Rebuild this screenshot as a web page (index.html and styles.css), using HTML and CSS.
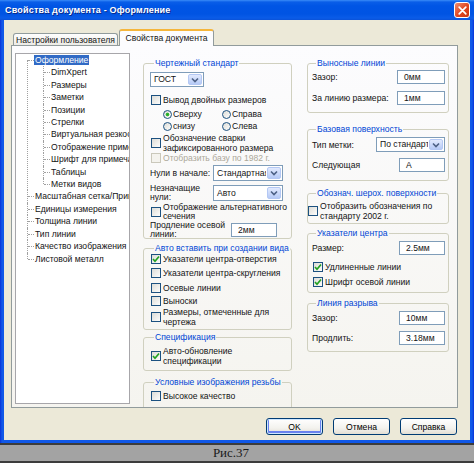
FILE: index.html
```html
<!DOCTYPE html>
<html lang="ru">
<head>
<meta charset="utf-8">
<title>Свойства документа - Оформление</title>
<link rel="stylesheet" href="styles.css">
</head>
<body>
<div class="window">
  <div class="titlebar">
    <span class="title">Свойства документа - Оформление</span>
    <span class="close"><svg width="9" height="9" viewBox="0 0 9 9"><path d="M1.2 1.2 L7.8 7.8 M7.8 1.2 L1.2 7.8" stroke="#fff" stroke-width="1.7" stroke-linecap="round"/></svg></span>
  </div>
  <div class="client">
    <div class="tabs">
      <div class="tab">Настройки пользователя</div>
      <div class="tab active">Свойства документа</div>
    </div>
    <div class="panel">
      <div class="tree">
        <ul class="root">
          <li><span class="sel">Оформление</span>
            <ul>
              <li>DimXpert</li>
              <li>Размеры</li>
              <li>Заметки</li>
              <li>Позиции</li>
              <li>Стрелки</li>
              <li>Виртуальная резкость</li>
              <li>Отображение примечаний</li>
              <li>Шрифт для примечаний</li>
              <li>Таблицы</li>
              <li>Метки видов</li>
            </ul>
          </li>
          <li>Масштабная сетка/Привязка</li>
          <li>Единицы измерения</li>
          <li>Толщина линии</li>
          <li>Тип линии</li>
          <li>Качество изображения</li>
          <li>Листовой металл</li>
        </ul>
      </div>

      <div class="middle">
        <fieldset class="grp m1">
          <legend>Чертежный стандарт</legend>
          <div class="combo c-gost"><span class="cv">ГОСТ</span><span class="dd"><svg width="8" height="6" viewBox="0 0 8 6"><path d="M1 1.5 L4 4.5 L7 1.5" fill="none" stroke="#4d6185" stroke-width="1.6"/></svg></span></div>
          <div class="chk r-dbl"><span class="cb"></span><span>Вывод двойных размеров</span></div>
          <div class="radios">
            <div class="rad"><span class="rb on"></span><span>Сверху</span></div>
            <div class="rad"><span class="rb"></span><span>Справа</span></div>
            <div class="rad"><span class="rb"></span><span>снизу</span></div>
            <div class="rad"><span class="rb"></span><span>Слева</span></div>
          </div>
          <div class="chk two r-weld"><span class="cb"></span><span>Обозначение сварки<br>зафиксированного размера</span></div>
          <div class="chk dis"><span class="cb"></span><span>Отобразить базу по 1982 г.</span></div>
          <div class="frow r-zero"><span class="flbl w63">Нули в начале:</span><div class="combo c-wide"><span class="cv">Стандартная</span><span class="dd"><svg width="8" height="6" viewBox="0 0 8 6"><path d="M1 1.5 L4 4.5 L7 1.5" fill="none" stroke="#4d6185" stroke-width="1.6"/></svg></span></div></div>
          <div class="frow r-nz"><span class="flbl w63 two">Незначащие<br>нули:</span><div class="combo c-wide"><span class="cv">Авто</span><span class="dd"><svg width="8" height="6" viewBox="0 0 8 6"><path d="M1 1.5 L4 4.5 L7 1.5" fill="none" stroke="#4d6185" stroke-width="1.6"/></svg></span></div></div>
          <div class="chk two r-alt"><span class="cb"></span><span>Отображение альтернативного<br>сечения</span></div>
          <div class="frow r-prod"><span class="flbl w81 two">Продление осевой<br>линии:</span><span class="inp w46">2мм</span></div>
        </fieldset>

        <fieldset class="grp m2">
          <legend>Авто вставить при создании вида</legend>
          <div class="chk h12"><span class="cb on"><svg width="8" height="8" viewBox="0 0 8 8"><path d="M1 4 L3 6.2 L7 1.5" fill="none" stroke="#21a121" stroke-width="1.7"/></svg></span><span>Указатели центра-отверстия</span></div>
          <div class="chk h15"><span class="cb"></span><span>Указатели центра-скругления</span></div>
          <div class="chk h15"><span class="cb"></span><span>Осевые линии</span></div>
          <div class="chk h12"><span class="cb"></span><span>Выноски</span></div>
          <div class="chk two h20"><span class="cb"></span><span>Размеры, отмеченные для<br>чертежа</span></div>
        </fieldset>

        <fieldset class="grp m3">
          <legend>Спецификация</legend>
          <div class="chk two h20 r-spec"><span class="cb on"><svg width="8" height="8" viewBox="0 0 8 8"><path d="M1 4 L3 6.2 L7 1.5" fill="none" stroke="#21a121" stroke-width="1.7"/></svg></span><span>Авто-обновление<br>спецификации</span></div>
        </fieldset>

        <fieldset class="grp m4">
          <legend>Условные изображения резьбы</legend>
          <div class="chk h10 r-hq"><span class="cb"></span><span>Высокое качество</span></div>
        </fieldset>
      </div>

      <div class="right">
        <fieldset class="grp rg1">
          <legend>Выносные линии</legend>
          <div class="frow rr a2"><span>Зазор:</span><span class="inp w48">0мм</span></div>
          <div class="frow rr a7"><span>За линию размера:</span><span class="inp w48">1мм</span></div>
        </fieldset>

        <fieldset class="grp rg2">
          <legend>Базовая поверхность</legend>
          <div class="frow rr a3"><span>Тип метки:</span><div class="combo c-std"><span class="cv">По стандарту</span><span class="dd"><svg width="8" height="6" viewBox="0 0 8 6"><path d="M1 1.5 L4 4.5 L7 1.5" fill="none" stroke="#4d6185" stroke-width="1.6"/></svg></span></div></div>
          <div class="frow rr a6"><span>Следующая</span><span class="inp w46">A</span></div>
        </fieldset>

        <fieldset class="grp rg3">
          <legend>Обознач. шерох. поверхности</legend>
          <div class="chk two r-rough"><span class="cb"></span><span>Отобразить обозначения по<br>стандарту 2002 г.</span></div>
        </fieldset>

        <fieldset class="grp rg4">
          <legend>Указатели центра</legend>
          <div class="frow rr a3"><span>Размер:</span><span class="inp w46">2.5мм</span></div>
          <div class="chk h12 r-ext"><span class="cb on"><svg width="8" height="8" viewBox="0 0 8 8"><path d="M1 4 L3 6.2 L7 1.5" fill="none" stroke="#21a121" stroke-width="1.7"/></svg></span><span>Удлиненные линии</span></div>
          <div class="chk h12 r-font"><span class="cb on"><svg width="8" height="8" viewBox="0 0 8 8"><path d="M1 4 L3 6.2 L7 1.5" fill="none" stroke="#21a121" stroke-width="1.7"/></svg></span><span>Шрифт осевой линии</span></div>
        </fieldset>

        <fieldset class="grp rg5">
          <legend>Линия разрыва</legend>
          <div class="frow rr a3"><span>Зазор:</span><span class="inp w46">10мм</span></div>
          <div class="frow rr a6"><span>Продлить:</span><span class="inp w46">3.18мм</span></div>
        </fieldset>
      </div>
    </div>
    <div class="buttons">
      <button class="btn def">OK</button>
      <button class="btn">Отмена</button>
      <button class="btn">Справка</button>
    </div>
  </div>
</div>
<div class="caption">Рис.37</div>
</body>
</html>
```

FILE: styles.css
```css
* { box-sizing: border-box; }
html, body { margin: 0; padding: 0; }
body {
  width: 474px; height: 463px; overflow: hidden;
  background: #a3a3a3;
  font-family: "Liberation Sans", Arial, sans-serif;
  font-size: 8.6px; color: #141414;
}

/* window frame */
.window {
  height: 443px;
  display: flex; flex-direction: column;
  background: linear-gradient(90deg, #0831d9 0, #1058e8 2px, #1058e8 calc(100% - 2px), #0831d9 100%);
}
.titlebar {
  height: 20px; flex: none;
  display: flex; align-items: center; justify-content: space-between;
  padding: 0 4px 0 5px;
  background: linear-gradient(#3a8cf8 0, #0a5ee8 2px, #0055e5 6px, #0054e3 14px, #0a5ce8 18px, #0a52d8 20px);
}
.title {
  color: #fff; font-weight: bold; font-size: 9px;
  text-shadow: 1px 1px 0 #0a2a8a;
  letter-spacing: 0.2px;
}
.close {
  width: 16px; height: 16px;
  border: 1px solid #fff; border-radius: 3px;
  background: linear-gradient(135deg, #f28d6e, #e0451e 55%, #c8340f);
  display: flex; align-items: center; justify-content: center;
}

.client {
  flex: 1;
  margin: 0 4px 3px 4px;
  background: #ece9d8;
  padding: 9px 0 0 7px;
  display: flex; flex-direction: column;
}

/* tabs */
.tabs {
  height: 16px; display: flex; align-items: flex-end;
  padding-left: 2px;
}
.tab {
  height: 12px; width: 105px;
  border: 1px solid #919b9c; border-bottom: none;
  border-radius: 3px 3px 0 0;
  background: linear-gradient(#fefefe, #ecebe6);
  display: flex; align-items: center; justify-content: center;
  white-space: nowrap;
}
.tab.active {
  height: 17px; width: 95px; margin-left: 1px; margin-bottom: -1px;
  border-top: 2px solid #f5b63c;
  background: #fcfcfe;
  position: relative; z-index: 1;
  padding-bottom: 2px;
}

.panel {
  width: 447px; height: 363px;
  border: 1px solid #919b9c;
  background: linear-gradient(#fcfcfe, #f5f4ef);
  display: flex;
  padding: 7px 0 0 3px;
}

/* tree */
.tree {
  width: 115px; height: 351px; flex: none;
  border: 1px solid #a7a6aa;
  background: #fff;
  padding: 0 0 0 11px;
  overflow: hidden;
  white-space: nowrap;
}
.tree ul { list-style: none; margin: 0; padding: 0; }
.tree ul ul { padding-left: 8px; }
.tree li {
  position: relative;
  padding-left: 8px;
  line-height: 12.4px;
}
.tree li::before {
  content: ""; position: absolute; left: 0; top: 0; bottom: 0;
  border-left: 1px dotted #a0a0a0;
}
.tree li::after {
  content: ""; position: absolute; left: 1px; top: 6px; width: 6px;
  border-top: 1px dotted #a0a0a0;
}
.tree .root > li:first-child::before { top: 6px; }
.tree li:last-child::before { bottom: auto; height: 6px; }
.sel {
  background: #316ac5; color: #fff;
  padding: 0 1px; margin-left: -1px;
}

/* columns */
.middle {
  width: 149px; flex: none; margin-left: 13px;
  overflow: hidden;
  padding-top: 5px;
  display: flex; flex-direction: column;
}
.right {
  width: 142px; flex: none; margin-left: 15px;
  padding-top: 5px;
  display: flex; flex-direction: column;
}

fieldset.grp {
  margin: 0; min-width: 0;
  border: 1px solid #d0d0bf; border-radius: 3px;
  padding: 0 4px 0 6px;
  display: flex; flex-direction: column;
}
fieldset.grp legend {
  padding: 0 1px; margin-left: 4px;
  color: #0046d5;
  line-height: 10px; height: 10px;
  white-space: nowrap;
}

/* controls */
.chk {
  display: flex; align-items: center; gap: 2px;
  margin-left: 1px;
  line-height: 12px; white-space: nowrap;
}
.chk.two { line-height: 10px; }
.cb {
  width: 10px; height: 10px; flex: none;
  border: 1px solid #1c5180;
  background: linear-gradient(135deg, #dcdcd7, #fdfdfc);
  display: inline-flex; align-items: center; justify-content: center;
}
.chk.dis { color: #aca899; height: 10px; }
.chk.dis .cb { border-color: #cac8bb; background: #f4f3ee; }

.radios {
  margin: 2px 0 0 13px;
  display: grid; grid-template-columns: 59px auto; grid-auto-rows: 12px;
}
.rad { display: flex; align-items: center; gap: 1px; white-space: nowrap; }
.rb {
  width: 9px; height: 9px; flex: none;
  border: 1px solid #1c5180; border-radius: 50%;
  background: linear-gradient(135deg, #dcdcd7, #fdfdfc);
}
.rb.on {
  background: radial-gradient(circle, #21a121 0, #3bbd3b 1.6px, transparent 2.2px), linear-gradient(135deg, #dcdcd7, #fdfdfc);
}

.combo {
  display: flex; height: 15px;
  border: 1px solid #7f9db9; background: #fff;
}
.combo .cv {
  flex: 1; padding-left: 3px; line-height: 13px;
  overflow: hidden; white-space: nowrap;
}
.combo .dd {
  width: 14px; flex: none; margin: 1px;
  border: 1px solid #b4c8f4; border-radius: 2px;
  background: linear-gradient(#e2eafe, #b6caf6);
  display: flex; align-items: center; justify-content: center;
}
.c-gost { width: 54px; margin-top: 4px; }
.c-wide { width: 70px; height: 16px; }
.c-wide .cv { line-height: 14px; }
.c-std { width: 69px; }

.inp {
  display: block;
  height: 14px; border: 1px solid #7f9db9; background: #fff;
  padding-left: 6px; line-height: 12px; white-space: nowrap;
}
.w46 { width: 46px; }
.w48 { width: 48px; }

.frow { display: flex; align-items: center; white-space: nowrap; }
.flbl { flex: none; }
.flbl.two { line-height: 9.5px; }
.w63 { width: 63px; }
.w81 { width: 81px; }
.rr { justify-content: space-between; }

/* middle rows */
.r-dbl { margin-top: 7px; height: 12px; }
.r-weld { height: 21px; }
.r-zero { margin-top: 2px; height: 16px; }
.r-nz { margin-top: 2px; height: 20px; }
.chk.r-alt { height: 18px; line-height: 9.5px; }
.frow.r-prod { height: 17px; }
.r-prod .flbl.two { line-height: 8.5px; }
fieldset.m1 { padding-bottom: 0; }

.h10 { height: 10px; }
.h12 { height: 12px; }
.h15 { height: 15px; }
.h20 { height: 20px; }

fieldset.m2 { margin-top: 4px; padding-bottom: 2px; }
fieldset.m3 { margin-top: 2px; padding-bottom: 4px; }
.r-spec { margin-top: 4px; }
fieldset.m4 { margin-top: 6px; min-height: 60px; }
.r-hq { margin-top: 4px; }

/* right rows */
.right fieldset.grp { padding: 0 3px 0 4px; }
.a2 { margin-top: 2px; }
.a3 { margin-top: 3px; }
.a6 { margin-top: 6px; }
.a7 { margin-top: 7px; }
.right fieldset.rg1 { padding-bottom: 7px; }
.right fieldset.rg2 { margin-top: 11px; padding-bottom: 8px; }
.right fieldset.rg3 { margin-top: 7px; padding-bottom: 2px; }
.chk.r-rough { margin-left: -4px; margin-top: 3px; height: 20px; }
.right fieldset.rg4 { margin-top: 4px; padding-bottom: 4px; }
.r-ext { margin-top: 6px; }
.r-font { margin-top: 3px; }
.right fieldset.rg5 { margin-top: 5px; padding-bottom: 6px; }

/* buttons */
.buttons {
  display: flex; justify-content: flex-end; gap: 10px;
  margin-top: 10px; padding-right: 13px;
}
.btn {
  width: 57px; height: 17px; padding: 0;
  border: 1px solid #003c74; border-radius: 3px;
  background: linear-gradient(#ffffff, #f3f2ee 60%, #e3dfd4);
  font: inherit; color: #000;
}
.btn.def { box-shadow: inset 0 0 0 1px #cee7ff, inset 0 -1px 0 2px #6982ee; }

/* figure caption */
.caption {
  height: 20px;
  border-top: 2px solid #3c3c3c;
  border-bottom: 2px solid #3c3c3c;
  background: #a3a3a3;
  display: flex; align-items: center; justify-content: center;
  font-family: "Liberation Serif", "Times New Roman", serif;
  font-size: 13px; color: #1a1a1a;
  padding-right: 12px;
}
```
